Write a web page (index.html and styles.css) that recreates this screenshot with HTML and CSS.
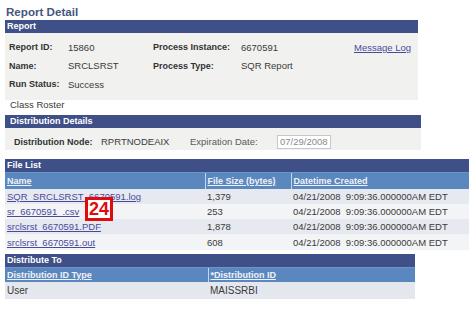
FILE: index.html
```html
<!DOCTYPE html>
<html lang="en">
<head>
    <meta charset="UTF-8">
    <title>Report Detail</title>
    <link rel="stylesheet" href="styles.css">
</head>
<body>
    <h1 class="page-title">Report Detail</h1>

    <div class="panel report">
        <div class="bar">Report</div>
        <div class="report-body">
            <span class="label">Report ID:</span>
            <span class="value">15860</span>
            <span class="label">Process Instance:</span>
            <span class="value">6670591</span>
            <a href="#" class="link">Message Log</a>

            <span class="label">Name:</span>
            <span class="value">SRCLSRST</span>
            <span class="label">Process Type:</span>
            <span class="value">SQR Report</span>
            <span></span>

            <span class="label">Run Status:</span>
            <span class="value">Success</span>
            <span></span><span></span><span></span>
        </div>
    </div>

    <div class="caption">Class Roster</div>

    <div class="panel distribution">
        <div class="bar bar-indent">Distribution Details</div>
        <div class="dist-body">
            <span class="label node-label">Distribution Node:</span>
            <span class="value node-value">RPRTNODEAIX</span>
            <span class="muted exp-label">Expiration Date:</span>
            <span class="date-box">07/29/2008</span>
        </div>
    </div>

    <div class="panel file-list">
        <div class="bar">File List</div>
        <table class="grid">
            <thead>
                <tr>
                    <th class="col-name"><a href="#">Name</a></th>
                    <th class="col-size"><a href="#">File Size (bytes)</a></th>
                    <th><a href="#">Datetime Created</a></th>
                </tr>
            </thead>
            <tbody>
                <tr>
                    <td><a href="#" class="link">SQR_SRCLSRST_6670591.log</a></td>
                    <td>1,379</td>
                    <td>04/21/2008&nbsp; 9:09:36.000000AM EDT</td>
                </tr>
                <tr>
                    <td><a href="#" class="link">sr_6670591_.csv</a></td>
                    <td>253</td>
                    <td>04/21/2008&nbsp; 9:09:36.000000AM EDT</td>
                </tr>
                <tr>
                    <td><a href="#" class="link">srclsrst_6670591.PDF</a></td>
                    <td>1,878</td>
                    <td>04/21/2008&nbsp; 9:09:36.000000AM EDT</td>
                </tr>
                <tr>
                    <td><a href="#" class="link">srclsrst_6670591.out</a></td>
                    <td>608</td>
                    <td>04/21/2008&nbsp; 9:09:36.000000AM EDT</td>
                </tr>
            </tbody>
        </table>
        <div class="callout">24</div>
    </div>

    <div class="panel distribute">
        <div class="bar">Distribute To</div>
        <table class="grid">
            <thead>
                <tr>
                    <th class="col-type"><a href="#">Distribution ID Type</a></th>
                    <th><a href="#">*Distribution ID</a></th>
                </tr>
            </thead>
            <tbody>
                <tr class="single">
                    <td>User</td>
                    <td>MAISSRBI</td>
                </tr>
            </tbody>
        </table>
    </div>
</body>
</html>
```

FILE: styles.css
```css
* {
    margin: 0;
    padding: 0;
    box-sizing: border-box;
}

body {
    font-family: "Liberation Sans", Arial, sans-serif;
    font-size: 9.5px;
    color: #3a3a3a;
    background: #fff;
    padding: 0 0 0 5px;
}

.page-title {
    font-size: 11.6px;
    font-weight: bold;
    color: #46567f;
    line-height: 14px;
    padding: 5px 0 1px 1px;
}

.panel {
    position: relative;
}

.bar {
    height: 13px;
    line-height: 13px;
    background: #3f4f87;
    color: #fff;
    font-size: 9px;
    font-weight: bold;
    padding-left: 2px;
}

.bar-indent {
    padding-left: 5px;
}

.label {
    font-size: 9px;
    font-weight: bold;
    color: #333;
}

.link {
    color: #4a4a9c;
    text-decoration: underline;
}

.muted {
    color: #5a5a5a;
}

/* report summary */
.report {
    width: 413px;
}

.report-body {
    background: #f1f1ef;
    height: 67px;
    padding: 5px 0 0 4px;
    display: grid;
    grid-template-columns: 59px 85px 88px 113px auto;
    grid-auto-rows: 18.5px;
    align-items: center;
}

.caption {
    padding: 0 0 0 5px;
    height: 15px;
    line-height: 10px;
    padding-top: 0;
    color: #3a3a3a;
}

/* distribution details */
.distribution {
    width: 416px;
}

.dist-body {
    background: #f1f1ef;
    height: 22px;
    display: flex;
    align-items: center;
    padding: 5px 0 0 9px;
}

.node-label {
    width: 87px;
}

.node-value {
    width: 89px;
}

.exp-label {
    width: 87px;
}

.date-box {
    height: 14px;
    width: 54px;
    line-height: 12px;
    border: 1px solid #c8c8c8;
    background: #fff;
    color: #8a8a8a;
    padding-left: 2px;
}

/* file tables */
.file-list {
    width: 464px;
    margin-top: 9px;
}

.grid {
    width: 100%;
    border-collapse: collapse;
    table-layout: fixed;
}

.grid th {
    background: #5b87bf;
    border-top: 1px solid #6d95c8;
    border-left: 1px solid #c9d6e8;
    height: 16px;
    text-align: left;
    padding: 0 2px;
    font-size: 9px;
    font-weight: bold;
}

.grid th:first-child {
    border-left: none;
}

.grid th a {
    color: #eef2fa;
    text-decoration: underline;
}

.grid td {
    height: 15.3px;
    padding: 0 2px;
    white-space: nowrap;
    overflow: hidden;
}

.grid tbody tr:nth-child(odd) td {
    background: #e6e9ef;
}

.grid tbody tr:nth-child(even) td {
    background: #f3f4f6;
}

.col-name {
    width: 200px;
}

.col-size {
    width: 86px;
}

.callout {
    position: absolute;
    left: 80px;
    top: 38px;
    width: 28px;
    height: 24px;
    border: 3px solid #e00b0b;
    background: #fff;
    color: #e00b0b;
    font-size: 18px;
    font-weight: bold;
    line-height: 18px;
    text-align: center;
}

/* distribute to */
.distribute {
    width: 410px;
    margin-top: 4px;
}

.col-type {
    width: 203px;
}

.distribute th {
    height: 15px;
}

.grid tbody tr.single td {
    height: 17px;
    background: #e4e8ee;
    font-size: 10px;
}
```
